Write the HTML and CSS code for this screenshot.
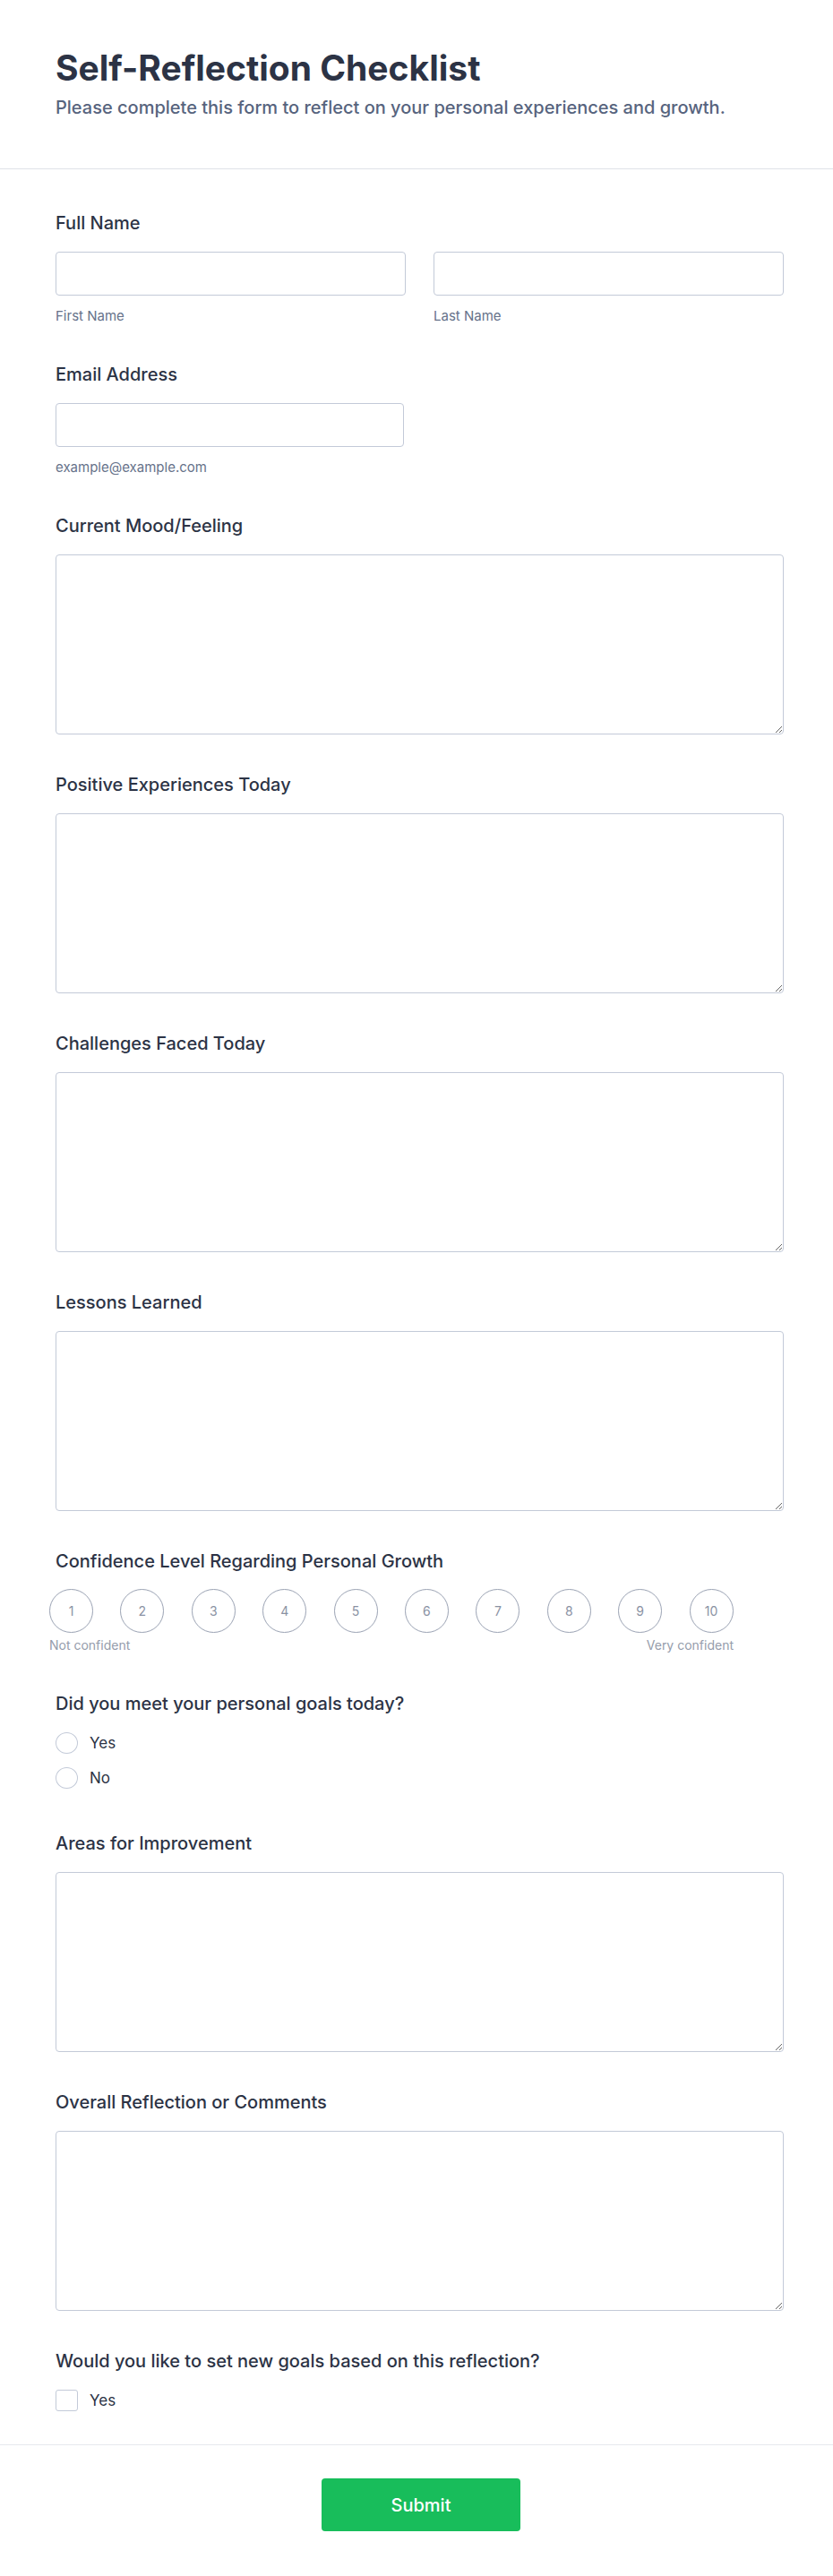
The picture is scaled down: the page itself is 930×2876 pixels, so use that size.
FILE: index.html
```html
<!DOCTYPE html>
<html>
  <head>
    <title>Self-Reflection Checklist</title>
    <link rel="stylesheet" href="styles.css">
  </head>
  <body>
    <header class="form-header">
      <h1 class="title">Self-Reflection Checklist</h1>
      <p class="subtitle">Please complete this form to reflect on your personal experiences and growth.</p>
    </header>

    <form class="form-body">
      <div class="field">
        <label class="label">Full Name</label>
        <div class="name-row">
          <div class="name-col">
            <input type="text" class="text-input">
            <span class="sublabel">First Name</span>
          </div>
          <div class="name-col">
            <input type="text" class="text-input">
            <span class="sublabel">Last Name</span>
          </div>
        </div>
      </div>

      <div class="field">
        <label class="label">Email Address</label>
        <div class="email-col">
          <input type="email" class="text-input">
          <span class="sublabel">example@example.com</span>
        </div>
      </div>

      <div class="field">
        <label class="label">Current Mood/Feeling</label>
        <textarea class="text-area"></textarea>
      </div>

      <div class="field">
        <label class="label">Positive Experiences Today</label>
        <textarea class="text-area"></textarea>
      </div>

      <div class="field">
        <label class="label">Challenges Faced Today</label>
        <textarea class="text-area"></textarea>
      </div>

      <div class="field">
        <label class="label">Lessons Learned</label>
        <textarea class="text-area"></textarea>
      </div>

      <div class="field">
        <label class="label">Confidence Level Regarding Personal Growth</label>
        <div class="scale">
          <span class="scale-dot">1</span>
          <span class="scale-dot">2</span>
          <span class="scale-dot">3</span>
          <span class="scale-dot">4</span>
          <span class="scale-dot">5</span>
          <span class="scale-dot">6</span>
          <span class="scale-dot">7</span>
          <span class="scale-dot">8</span>
          <span class="scale-dot">9</span>
          <span class="scale-dot">10</span>
        </div>
        <div class="scale-labels">
          <span>Not confident</span>
          <span>Very confident</span>
        </div>
      </div>

      <div class="field field-radio">
        <label class="label">Did you meet your personal goals today?</label>
        <div class="choices">
          <div class="choice"><span class="radio"></span>Yes</div>
          <div class="choice"><span class="radio"></span>No</div>
        </div>
      </div>

      <div class="field">
        <label class="label">Areas for Improvement</label>
        <textarea class="text-area"></textarea>
      </div>

      <div class="field">
        <label class="label">Overall Reflection or Comments</label>
        <textarea class="text-area"></textarea>
      </div>

      <div class="field field-last">
        <label class="label">Would you like to set new goals based on this reflection?</label>
        <div class="choices">
          <div class="choice"><span class="checkbox"></span>Yes</div>
        </div>
      </div>
    </form>

    <div class="form-footer">
      <button type="button" class="submit-button">Submit</button>
    </div>
  </body>
</html>
```

FILE: styles.css
```css
body {
    margin: 0;
    background-color: white;
    color: #2c3345;
    font-family: Inter, "Noto Sans", sans-serif;
}

.form-header {
    padding: 52px 62px 56px;
    border-bottom: 1px solid #dfe2e8;
}

.title {
    margin: 0;
    font-size: 39px;
    line-height: 48px;
    font-weight: 700;
}

.subtitle {
    margin: 8px 0 0;
    font-size: 20px;
    line-height: 24px;
    font-weight: 500;
    color: #57647e;
}

.form-body {
    padding: 48px 55px 0 62px;
}

.field {
    display: flex;
    flex-direction: column;
    margin-bottom: 44px;
}

.field-radio {
    margin-bottom: 49px;
}

.field-last {
    margin-bottom: 0;
    padding-bottom: 37px;
}

.label {
    font-size: 20px;
    line-height: 24px;
    font-weight: 500;
    margin-bottom: 20px;
}

.name-row {
    display: flex;
    gap: 31px;
}

.name-col,
.email-col {
    display: flex;
    flex-direction: column;
    width: 391px;
}

.email-col {
    width: 389px;
}

.text-input {
    box-sizing: border-box;
    height: 49px;
    width: 100%;
    border: 1px solid #c3cad8;
    border-radius: 4px;
    margin: 0;
}

.sublabel {
    margin-top: 14px;
    font-size: 15px;
    line-height: 18px;
    color: #66728a;
}

.text-area {
    box-sizing: border-box;
    width: 813px;
    height: 201px;
    margin: 0;
    border: 1px solid #c3cad8;
    border-radius: 4px;
    font-family: inherit;
}

.scale {
    display: flex;
    gap: 30.4px;
    margin-left: -7px;
    margin-top: -1px;
}

.scale-dot {
    box-sizing: border-box;
    width: 49px;
    height: 49px;
    border: 1px solid #9aa2b3;
    border-radius: 50%;
    display: flex;
    align-items: center;
    justify-content: center;
    font-size: 14px;
    color: #8a92a3;
}

.scale-labels {
    display: flex;
    justify-content: space-between;
    width: 764px;
    margin-left: -7px;
    margin-top: 5px;
    font-size: 14px;
    line-height: 18px;
    color: #959cab;
}

.choices {
    display: flex;
    flex-direction: column;
    gap: 15px;
}

.choice {
    display: flex;
    align-items: center;
    gap: 13px;
    height: 24px;
    font-size: 17px;
}

.radio,
.checkbox {
    box-sizing: border-box;
    width: 25px;
    height: 24px;
    border: 1px solid #c3cad8;
    border-radius: 50%;
}

.checkbox {
    border-radius: 3px;
}

.form-footer {
    border-top: 1px solid #e6e8ee;
    padding: 37px 0 50px 10px;
    display: flex;
    justify-content: center;
}

.submit-button {
    width: 222px;
    height: 59px;
    border: none;
    border-radius: 4px;
    background-color: #18bd5b;
    color: white;
    font-family: inherit;
    font-size: 20px;
    font-weight: 500;
    cursor: pointer;
}
```
